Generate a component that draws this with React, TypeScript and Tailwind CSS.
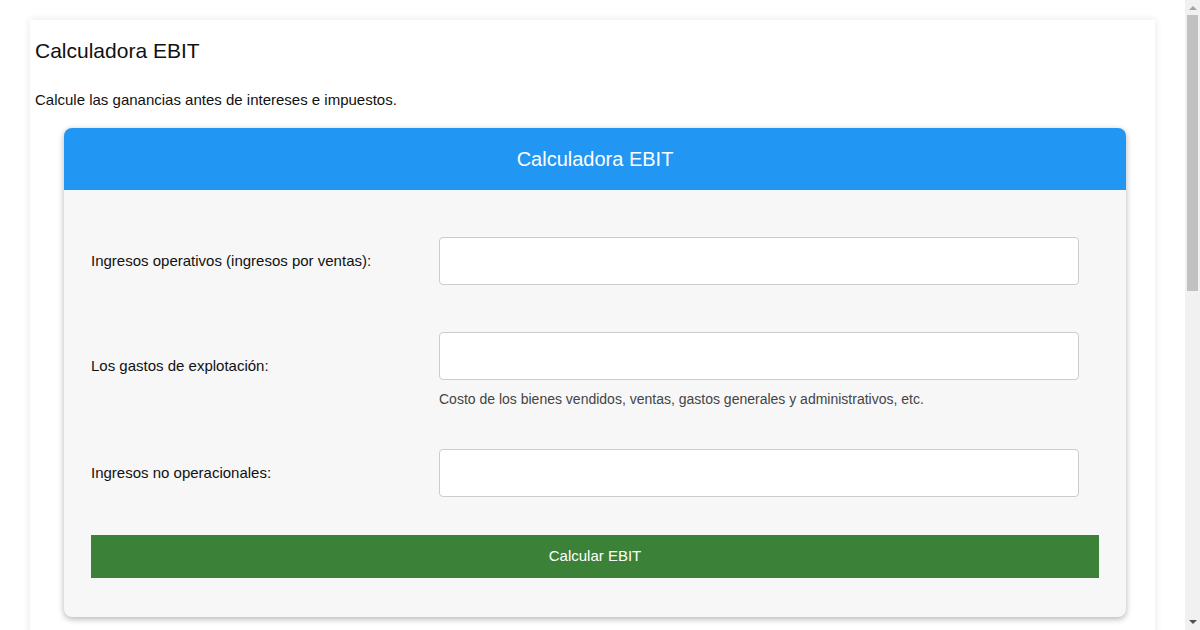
export default function App() {
  return (
    <div className="flex h-[630px] overflow-hidden bg-white font-['Liberation_Sans',Arial,sans-serif] text-[#111]">
      <main className="flex-1 overflow-hidden pt-5">
        <div className="mx-[30px] bg-white px-[5px] pb-[100px] shadow-[0_0_8px_rgba(0,0,0,0.1)]">
          <h2 className="pt-[19px] text-[21px] leading-6">Calculadora EBIT</h2>
          <p className="mt-[27px] text-[15px] leading-5">Calcule las ganancias antes de intereses e impuestos.</p>

          <div className="ml-[29px] mt-[18px] w-[1062px] overflow-hidden rounded-lg bg-[#f7f7f7] shadow-[0_2px_6px_rgba(0,0,0,0.3)]">
            <div className="flex h-[62px] items-center justify-center bg-[#2196f3] text-[20px] text-white">
              Calculadora EBIT
            </div>

            <div className="px-[27px] pb-[39px] pt-[47px] text-[15px]">
              <div className="flex items-center">
                <label className="w-[348px] leading-5">Ingresos operativos (ingresos por ventas):</label>
                <input className="h-12 w-[640px] rounded border border-[#ccc] bg-white px-3" />
              </div>

              <div className="mt-[47px] flex">
                <label className="mt-[24px] w-[348px] leading-5">Los gastos de explotación:</label>
                <div className="w-[640px]">
                  <input className="h-12 w-full rounded border border-[#ccc] bg-white px-3" />
                  <p className="mt-[9px] text-[14px] leading-5 text-[#444]">
                    Costo de los bienes vendidos, ventas, gastos generales y administrativos, etc.
                  </p>
                </div>
              </div>

              <div className="mt-[40px] flex items-center">
                <label className="w-[348px] leading-5">Ingresos no operacionales:</label>
                <input className="h-12 w-[640px] rounded border border-[#ccc] bg-white px-3" />
              </div>

              <button className="mt-[38px] flex h-[43px] w-full items-center justify-center bg-[#3b8238] text-[15px] text-white">
                Calcular EBIT
              </button>
            </div>
          </div>
        </div>
      </main>

      {/* page scrollbar */}
      <div className="flex w-[15px] shrink-0 flex-col bg-[#f1f1f1]">
        <div className="flex h-[15px] items-center justify-center">
          <svg width="8" height="5" viewBox="0 0 8 5">
            <path d="M0 5 L4 1 L8 5 Z" fill="#a3a3a3" />
          </svg>
        </div>
        <div className="mx-[2px] h-[276px] bg-[#c1c1c1]" />
        <div className="flex-1" />
        <div className="flex h-[15px] items-center justify-center">
          <svg width="8" height="5" viewBox="0 0 8 5">
            <path d="M0 0 L8 0 L4 4 Z" fill="#505050" />
          </svg>
        </div>
      </div>
    </div>
  );
}
